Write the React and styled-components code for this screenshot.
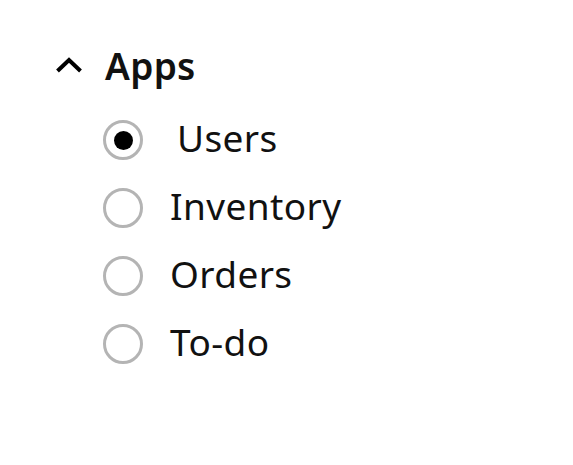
import React, { useState } from 'react'
import styled, { createGlobalStyle } from 'styled-components'

const GlobalStyle = createGlobalStyle`
  body {
    margin: 0;
    background: #ffffff;
    font-family: "Noto Sans", "Open Sans", sans-serif;
    color: #111111;
  }
`

const Tree = styled.div`
  padding: 40px 0 0 55px;
`

const Header = styled.button`
  display: flex;
  align-items: center;
  gap: 22px;
  height: 50px;
  padding: 0;
  border: none;
  background: none;
  cursor: pointer;
  font-family: inherit;
  font-size: 37px;
  font-weight: 600;
  letter-spacing: 0.3px;
  color: #111111;
`

const Chevron = styled.svg`
  width: 28px;
  height: 16px;
  flex-shrink: 0;
  transform: ${props => (props.$open ? 'none' : 'rotate(180deg)')};
`

const List = styled.div`
  display: flex;
  flex-direction: column;
  margin: 16px 0 0 48px;
`

const Item = styled.label`
  display: flex;
  align-items: center;
  gap: 27px;
  height: 68px;
  cursor: pointer;
  font-size: 37px;
  letter-spacing: 0.4px;
`

const Radio = styled.span`
  width: 40px;
  height: 40px;
  box-sizing: border-box;
  border: 3px solid #b4b4b4;
  border-radius: 50%;
  display: flex;
  align-items: center;
  justify-content: center;
  flex-shrink: 0;

  &::after {
    content: '';
    width: 19px;
    height: 19px;
    border-radius: 50%;
    background: #000000;
    display: ${props => (props.$checked ? 'block' : 'none')};
  }
`

const Label = styled.span`
  margin-bottom: 6px;
  padding-left: ${props => (props.$checked ? '7px' : '0')};
`

const apps = ['Users', 'Inventory', 'Orders', 'To-do']

export default function App() {
  const [open, setOpen] = useState(true)
  const [selected, setSelected] = useState('Users')

  return (
    <>
      <GlobalStyle />
      <Tree>
        <Header onClick={() => setOpen(!open)}>
          <Chevron $open={open} viewBox="0 0 28 16" fill="none">
            <path d="M2.5 14 L14 3 L25.5 14" stroke="#000" strokeWidth="4" />
          </Chevron>
          Apps
        </Header>
        {open && (
          <List>
            {apps.map(name => (
              <Item key={name} onClick={() => setSelected(name)}>
                <Radio $checked={selected === name} />
                <Label $checked={selected === name}>{name}</Label>
              </Item>
            ))}
          </List>
        )}
      </Tree>
    </>
  )
}
